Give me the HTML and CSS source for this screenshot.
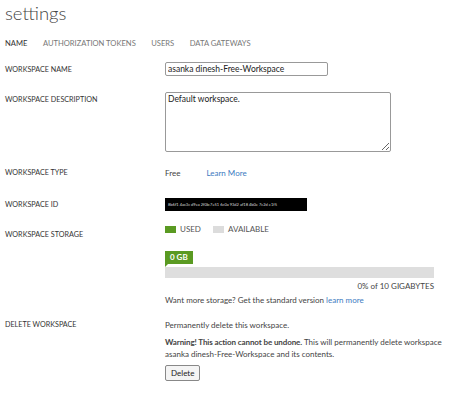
FILE: index.html
```html
<!DOCTYPE html>
<html lang="en">
<head>
    <meta charset="UTF-8">
    <title>settings</title>
    <link rel="stylesheet" href="styles.css">
</head>
<body>
    <h1 class="page-title">settings</h1>
    <div class="tabs">
        <span class="tab active">NAME</span>
        <span class="tab">AUTHORIZATION TOKENS</span>
        <span class="tab">USERS</span>
        <span class="tab">DATA GATEWAYS</span>
    </div>

    <div class="row row-name">
        <div class="label">WORKSPACE NAME</div>
        <div class="value"><input class="name-input" type="text" value="asanka dinesh-Free-Workspace"></div>
    </div>
    <div class="row row-desc">
        <div class="label">WORKSPACE DESCRIPTION</div>
        <div class="value"><textarea class="desc-input">Default workspace.</textarea></div>
    </div>
    <div class="row row-type">
        <div class="label">WORKSPACE TYPE</div>
        <div class="value"><span>Free</span><a class="link learn-more" href="#">Learn More</a></div>
    </div>
    <div class="row row-id">
        <div class="label">WORKSPACE ID</div>
        <div class="value"><div class="id-box"><span>8b6f1 4ac3c d9ea 2f0b:7e51 6c0a 93d2 af18 4b0e 7c2d e1f5</span></div></div>
    </div>
    <div class="row row-storage">
        <div class="label">WORKSPACE STORAGE</div>
        <div class="value">
            <div class="legend">
                <span class="swatch used"></span><span>USED</span>
                <span class="swatch avail"></span><span>AVAILABLE</span>
            </div>
            <div class="badge">0 GB</div>
            <div class="bar"><div class="bar-fill" style="width: 0%"></div></div>
            <div class="bar-caption">0% of 10 GIGABYTES</div>
            <div class="more">Want more storage? Get the standard version <a class="link" href="#">learn more</a></div>
        </div>
    </div>
    <div class="row row-delete">
        <div class="label">DELETE WORKSPACE</div>
        <div class="value">
            <div>Permanently delete this workspace.</div>
            <div class="warning"><b>Warning! This action cannot be undone.</b> This will permanently delete workspace asanka dinesh-Free-Workspace and its contents.</div>
            <button class="delete-btn">Delete</button>
        </div>
    </div>
</body>
</html>
```

FILE: styles.css
```css
body { margin: 0; padding: 0 5px; background: #fff; color: #444; font-family: Lato, "Open Sans", sans-serif; font-size: 8px; width: 464px; }
.page-title { margin: 0; font-size: 18.5px; font-weight: 300; line-height: 26px; color: #444; }
.tabs { display: flex; margin-top: 11px; height: 12px; line-height: 12px; color: #777; font-size: 7.6px; }
.tab { margin-right: 15.5px; }
.tab.active { color: #333; }
.row { display: grid; grid-template-columns: 160px 1fr; }
.label { color: #333; font-size: 7.2px; }
.row-name { margin-top: 13px; align-items: center; }
.name-input { width: 163px; height: 14px; box-sizing: border-box; border: 1px solid #999; border-radius: 2px; padding: 0 2px; font: inherit; font-size: 8.5px; color: #222; display: block; }
.row-desc { margin-top: 16px; }
.row-desc .label { padding-top: 3px; }
.desc-input { width: 226px; height: 60px; box-sizing: border-box; border: 1px solid #999; border-radius: 2px; padding: 1px 2px; font: inherit; font-size: 8.5px; color: #222; display: block; }
.row-type { margin-top: 15px; line-height: 12px; }
.learn-more { margin-left: 26px; }
.link { color: #3d7bbf; text-decoration: none; }
.row-id { margin-top: 19px; align-items: center; }
.id-box { width: 142px; height: 13px; background: #000; color: #ddd; font-size: 4px; line-height: 13px; overflow: hidden; white-space: nowrap; padding-left: 3px; box-sizing: border-box; }
.row-storage { margin-top: 12px; }
.row-storage .label { padding-top: 6px; line-height: 12px; }
.legend { display: flex; align-items: center; height: 12px; color: #555; }
.swatch { width: 11px; height: 7px; margin-right: 4px; }
.swatch.used { background: #5a9a22; }
.swatch.avail { background: #dcdcdc; margin-left: 12px; }
.badge { position: relative; display: inline-block; margin-top: 16px; background: #5a9a22; color: #fff; font-weight: bold; padding: 0 5px; height: 13px; line-height: 13px; }
.badge::after { content: ""; position: absolute; left: 0; bottom: -3px; border-left: 3px solid #5a9a22; border-bottom: 3px solid transparent; }
.bar { width: 269px; height: 11px; margin-top: 3px; background: #dedede; }
.bar-fill { height: 100%; background: #5a9a22; }
.bar-caption { width: 269px; text-align: right; margin-top: 2px; line-height: 12px; }
.more { margin-top: 2px; line-height: 12px; }
.row-delete { margin-top: 13px; line-height: 12px; }
.warning { margin-top: 5px; max-width: 290px; }
.warning b { font-weight: bold; letter-spacing: -0.1px; }
.delete-btn { margin-top: 5px; font: inherit; color: #222; background: #f4f4f4; border: 1px solid #888; border-radius: 2px; padding: 2px 5px; height: 16px; line-height: 10px; }
```
